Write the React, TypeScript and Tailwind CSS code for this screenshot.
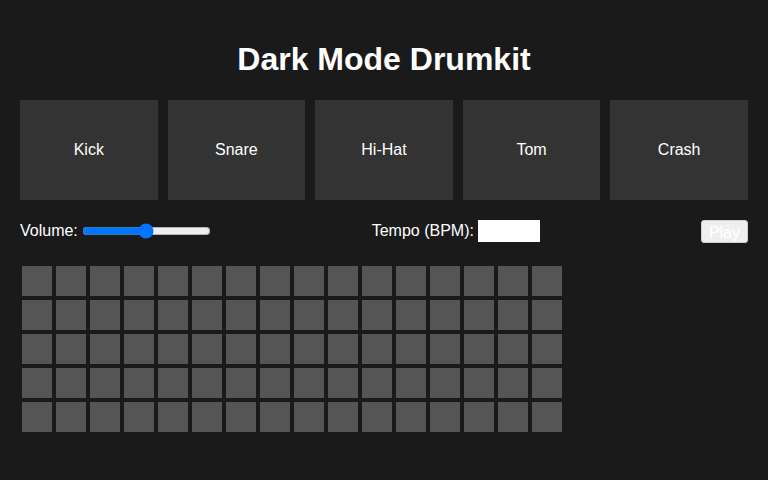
import { useState } from "react";

const pads = ["Kick", "Snare", "Hi-Hat", "Tom", "Crash"];

export default function App() {
  const [volume, setVolume] = useState(50);
  const [steps, setSteps] = useState<boolean[][]>(
    Array.from({ length: 5 }, () => Array(16).fill(false))
  );

  function toggle(r: number, c: number) {
    setSteps((prev) => prev.map((row, i) => (i === r ? row.map((v, j) => (j === c ? !v : v)) : row)));
  }

  return (
    <main className="min-h-screen bg-[#1a1a1a] p-5 text-white font-['Liberation_Sans',Arial,sans-serif] text-base">
      <h1 className="my-[21.44px] text-center text-[32px] font-bold leading-[37px]">Dark Mode Drumkit</h1>

      <div className="flex gap-[10px]">
        {pads.map((p) => (
          <button key={p} className="flex h-[100px] flex-1 items-center justify-center bg-[#333] text-base text-white">
            {p}
          </button>
        ))}
      </div>

      <div className="mt-5 mb-[21px] flex h-[23px] items-center justify-between">
        <label className="flex items-center">
          Volume:
          <input
            type="range"
            min={0}
            max={100}
            value={volume}
            onChange={(e) => setVolume(Number(e.target.value))}
            className="ml-[4px] w-[129px]"
          />
        </label>
        <label className="flex items-center">
          Tempo (BPM):
          <input type="text" className="ml-[4px] h-[22px] w-[62px] bg-white text-black" />
        </label>
        <button className="h-[23px] rounded-[3px] border border-[#d0d0d0] bg-[#efefef] px-[7px] text-white">
          Play
        </button>
      </div>

      <div className="flex flex-col">
        {steps.map((row, r) => (
          <div key={r} className="flex">
            {row.map((on, c) => (
              <div
                key={c}
                onClick={() => toggle(r, c)}
                className={`m-[2px] h-[30px] w-[30px] ${on ? "bg-[#1e90ff]" : "bg-[#555]"}`}
              />
            ))}
          </div>
        ))}
      </div>
    </main>
  );
}
